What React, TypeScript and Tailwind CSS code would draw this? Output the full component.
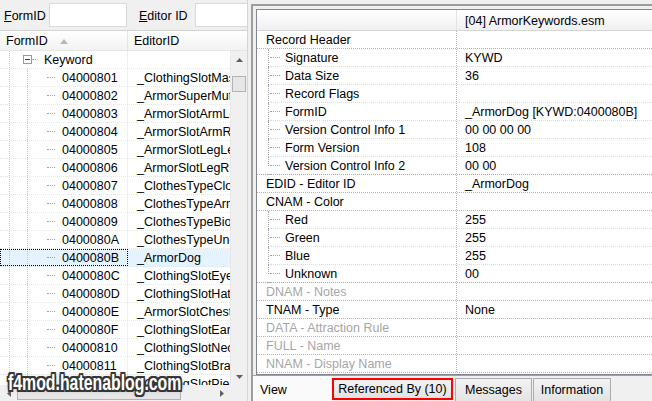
import React from 'react';

const leftRows: [string, string][] = [
  ['04000801', '_ClothingSlotMask'],
  ['04000802', '_ArmorSuperMutant'],
  ['04000803', '_ArmorSlotArmLeft'],
  ['04000804', '_ArmorSlotArmRight'],
  ['04000805', '_ArmorSlotLegLeft'],
  ['04000806', '_ArmorSlotLegRight'],
  ['04000807', '_ClothesTypeClothing'],
  ['04000808', '_ClothesTypeArmor'],
  ['04000809', '_ClothesTypeBio'],
  ['0400080A', '_ClothesTypeUnderarmor'],
  ['0400080B', '_ArmorDog'],
  ['0400080C', '_ClothingSlotEyes'],
  ['0400080D', '_ClothingSlotHat'],
  ['0400080E', '_ArmorSlotChest'],
  ['0400080F', '_ClothingSlotEars'],
  ['04000810', '_ClothingSlotNeck'],
  ['04000811', '_ClothingSlotBracelet'],
  ['04000812', '_ClothingSlotPiercing'],
];

type Row = { l: string; v?: string; lv: 0 | 1; gray?: boolean; last?: boolean };

const rightRows: Row[] = [
  { l: 'Record Header', lv: 0 },
  { l: 'Signature', v: 'KYWD', lv: 1 },
  { l: 'Data Size', v: '36', lv: 1 },
  { l: 'Record Flags', lv: 1 },
  { l: 'FormID', v: '_ArmorDog [KYWD:0400080B]', lv: 1 },
  { l: 'Version Control Info 1', v: '00 00 00 00', lv: 1 },
  { l: 'Form Version', v: '108', lv: 1 },
  { l: 'Version Control Info 2', v: '00 00', lv: 1, last: true },
  { l: 'EDID - Editor ID', v: '_ArmorDog', lv: 0 },
  { l: 'CNAM - Color', lv: 0 },
  { l: 'Red', v: '255', lv: 1 },
  { l: 'Green', v: '255', lv: 1 },
  { l: 'Blue', v: '255', lv: 1 },
  { l: 'Unknown', v: '00', lv: 1, last: true },
  { l: 'DNAM - Notes', lv: 0, gray: true },
  { l: 'TNAM - Type', v: 'None', lv: 0 },
  { l: 'DATA - Attraction Rule', lv: 0, gray: true },
  { l: 'FULL - Name', lv: 0, gray: true },
  { l: 'NNAM - Display Name', lv: 0, gray: true },
];

function Tri({ dir }: { dir: 'up' | 'down' | 'left' | 'right' }) {
  const pts = {
    up: '0,4 7,4 3.5,0',
    down: '0,0 7,0 3.5,4',
    left: '4,0 4,7 0,3.5',
    right: '0,0 0,7 4,3.5',
  }[dir];
  const vert = dir === 'up' || dir === 'down';
  return (
    <svg width={vert ? 7 : 4} height={vert ? 4 : 7} viewBox={vert ? '0 0 7 4' : '0 0 4 7'}>
      <polygon points={pts} fill="#606060" />
    </svg>
  );
}

function LeftPanel() {
  return (
    <div className="w-[248px] h-full shrink-0 flex flex-col border-r border-[#d5d5d5]">
      <div className="h-[30px] shrink-0 flex items-center">
        <span className="pl-[4px] w-[49px] pt-[2px]"><span className="underline">F</span>ormID</span>
        <div className="w-[78px] h-[24px] bg-white border border-[#dadada]" />
        <span className="ml-[12px] w-[56px] pt-[2px]"><span className="underline">E</span>ditor ID</span>
        <div className="flex-1 h-[24px] bg-white border border-[#dadada] border-r-0" />
      </div>

      <div className="flex-1 min-h-0 flex flex-col bg-white border-t border-[#d5d5d5]">
        <div className="h-[20px] shrink-0 flex bg-linear-to-b from-white to-[#f2f2f2] border-b border-[#e5e5e5]">
          <div className="w-[128px] shrink-0 flex items-center pl-[6px] pt-[2px] border-r border-[#e5e5e5]">
            FormID
            <svg className="ml-[12px]" width="8" height="5" viewBox="0 0 8 5">
              <polygon points="0,5 8,5 4,0" fill="#b8b8b8" />
            </svg>
          </div>
          <div className="flex items-center pl-[6px] pt-[2px]">EditorID</div>
        </div>

        <div className="flex-1 min-h-0 flex">
          <div className="w-[230px] shrink-0 overflow-hidden">
            <div className="h-[18px] flex border-b border-dotted border-[#e6e6e6]">
              <div className="w-[128px] shrink-0 h-full flex items-center border-r border-[#efefef]">
                <div className="w-[9px] shrink-0" />
                <div className="w-[14px] shrink-0 h-full border-l border-dotted border-[#c4c4c4]" />
                <div className="w-[9px] h-[9px] shrink-0 border border-[#9a9a9a] flex items-center justify-center bg-white">
                  <div className="w-[5px] h-px bg-[#3a3a3a]" />
                </div>
                <div className="w-[4px] border-t border-dotted border-[#a0a0a0]" />
                <span className="ml-[8px] pt-[2px]">Keyword</span>
              </div>
            </div>
            {leftRows.map(([id, ed]) => {
              const sel = id === '0400080B';
              return (
                <div
                  key={id}
                  className={
                    sel
                      ? 'h-[18px] flex border-b border-dotted border-[#e6e6e6] bg-[#e5f3ff]'
                      : 'h-[18px] flex border-b border-dotted border-[#e6e6e6]'
                  }
                >
                  <div
                    className={
                      sel
                        ? 'w-[128px] shrink-0 h-full flex items-center outline-1 outline-dotted outline-black -outline-offset-1'
                        : 'w-[128px] shrink-0 h-full flex items-center border-r border-[#efefef]'
                    }
                  >
                    <div className="w-[9px] shrink-0" />
                    <div className="w-[18px] shrink-0 h-full border-l border-dotted border-[#c4c4c4]" />
                    <div className="w-[20px] shrink-0 h-full border-l border-dotted border-[#c4c4c4]" />
                    <div className="w-[8px] shrink-0 border-t border-dotted border-[#a0a0a0]" />
                    <span className="ml-[7px] pt-[2px]">{id}</span>
                  </div>
                  <div className="flex items-center pl-[9px] pt-[2px] whitespace-nowrap">{ed}</div>
                </div>
              );
            })}
          </div>
          <div className="w-[17px] shrink-0 flex flex-col items-center bg-[#f0f0f0] border-l border-[#e8e8e8]">
            <div className="h-[17px] flex items-center justify-center"><Tri dir="up" /></div>
            <div className="mt-[8px] w-[14px] h-[16px] bg-[#e6e6e6] border border-[#b3b3b3]" />
            <div className="flex-1" />
            <div className="h-[17px] flex items-center justify-center"><Tri dir="down" /></div>
          </div>
        </div>

        <div className="h-[16px] shrink-0 flex bg-[#f0f0f0]">
          <div className="w-[230px] flex items-center">
            <div className="w-[17px] flex justify-center"><Tri dir="left" /></div>
            <div className="w-[164px] h-[13px] bg-[#e6e6e6] border border-[#b3b3b3]" />
            <div className="flex-1" />
            <div className="w-[17px] flex justify-center"><Tri dir="right" /></div>
          </div>
          <div className="flex-1" />
        </div>
      </div>
    </div>
  );
}

function RightPanel() {
  return (
    <div className="flex-1 min-w-0 h-full flex flex-col pt-[4px] pl-[3px]">
      <div className="flex-1 min-h-0 flex flex-col border-l-2 border-t-2 border-[#9d9d9d]">
        <div className="flex-1 min-h-0 flex flex-col pl-[3px] pt-[3px]">
          <div className="flex-1 min-h-0 flex flex-col overflow-hidden bg-white border-l border-t border-b border-[#828790]">
            <div className="h-[21px] shrink-0 flex bg-linear-to-b from-white to-[#f0f0f0] border-b border-[#d5d5d5]">
              <div className="w-[200px] shrink-0 border-r border-[#e3e3e3]" />
              <div className="flex items-center pl-[8px] pt-[2px] whitespace-nowrap">[04] ArmorKeywords.esm</div>
            </div>
            {rightRows.map((r, i) => {
              const tc = r.gray ? 'text-[#a6a6a6]' : 'text-black';
              if (r.lv === 0) {
                return (
                  <div key={i} className="h-[18px] shrink-0 flex border-b border-dotted border-[#b4b4b4]">
                    <div className={`w-[200px] shrink-0 flex items-center pl-[9px] pt-[2px] whitespace-nowrap border-r border-dotted border-[#b4b4b4] ${tc}`}>
                      {r.l}
                    </div>
                    <div className="flex items-center pl-[8px] pt-[2px] whitespace-nowrap">{r.v}</div>
                  </div>
                );
              }
              return (
                <div key={i} className="h-[18px] shrink-0 flex">
                  <div className={r.last ? 'w-[11px] shrink-0 border-b border-dotted border-[#a8a8a8]' : 'w-[11px] shrink-0'} />
                  <div className={r.last ? 'w-[2px] shrink-0 border-b border-dotted border-[#a8a8a8]' : 'w-[2px] shrink-0'}>
                    <div className={r.last ? 'h-[9px] border-l border-dotted border-[#a0a0a0]' : 'h-full border-l border-dotted border-[#a0a0a0]'} />
                  </div>
                  <div className={r.last ? 'flex-1 flex border-b border-dotted border-[#a8a8a8]' : 'flex-1 flex border-b border-dotted border-[#dcdcdc]'}>
                    <div className="w-[187px] shrink-0 flex items-center whitespace-nowrap border-r border-dotted border-[#b4b4b4]">
                      <div className="w-[10px] shrink-0 border-t border-dotted border-[#a0a0a0]" />
                      <span className="ml-[5px] pt-[2px]">{r.l}</span>
                    </div>
                    <div className="flex items-center pl-[8px] pt-[2px] whitespace-nowrap">{r.v}</div>
                  </div>
                </div>
              );
            })}
          </div>
        </div>

        <div className="h-[26px] shrink-0 flex items-start bg-[#f0f0f0] border-t border-[#a0a0a0]">
          <div className="w-[79px] h-full shrink-0 bg-[#fafafa] pl-[7px] pt-[8px]">View</div>
          <div className="mt-[2px] w-[121px] h-[22px] shrink-0 flex items-center justify-center pt-[1px] bg-linear-to-b from-[#f2f2f2] to-[#e2e2e2] border-2 border-[#ff0000]">
            Referenced By (10)
          </div>
          <div className="ml-[2px] mt-[2px] w-[77px] h-[26px] shrink-0 flex justify-center pt-[5px] bg-linear-to-b from-[#f2f2f2] to-[#e2e2e2] border border-[#acacac]">
            Messages
          </div>
          <div className="ml-[1px] mt-[2px] w-[78px] h-[26px] shrink-0 flex justify-center pt-[5px] bg-linear-to-b from-[#f2f2f2] to-[#e2e2e2] border border-[#acacac]">
            Information
          </div>
        </div>
      </div>
    </div>
  );
}

export default function App() {
  return (
    <div className="relative w-[652px] h-[401px] overflow-hidden flex bg-[#f0f0f0] text-[12.5px] leading-none text-black font-['Liberation_Sans',Arial,sans-serif]">
      <LeftPanel />
      <RightPanel />
      <div className="absolute left-[8px] top-[372px] origin-left scale-x-[0.72] whitespace-nowrap font-bold text-[22px] leading-none text-white [text-shadow:-2px_-2px_0_#363636,2px_-2px_0_#363636,-2px_2px_0_#363636,2px_2px_0_#363636,0_-2px_0_#363636,0_2px_0_#363636,-2px_0_0_#363636,2px_0_0_#363636,0_0_5px_#777]">
        f4mod.hatenablog.com
      </div>
    </div>
  );
}
